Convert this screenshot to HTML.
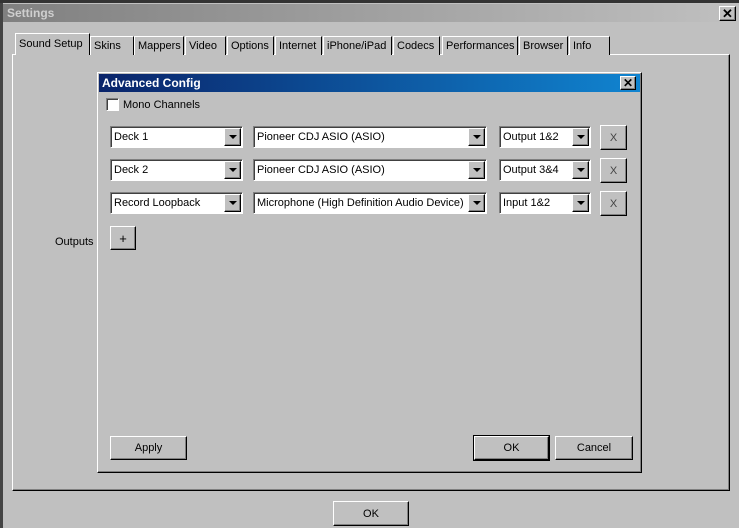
<!DOCTYPE html>
<html><head><style>
*{box-sizing:border-box;margin:0;padding:0}
body{width:739px;height:528px;overflow:hidden;background:#c0c0c0;font-family:"Liberation Sans",sans-serif;font-size:11px;color:#000;position:relative}
.a{position:absolute}
.raised{background:#c0c0c0;border:1px solid;border-color:#fff #000 #000 #fff;box-shadow:inset -1px -1px 0 #808080}
.sunk{background:#fff;border:1px solid;border-color:#808080 #fff #fff #808080;box-shadow:inset 1px 1px 0 #404040}
.btn{display:flex;align-items:center;justify-content:center;font-size:11px}
.combo{font-size:11px;line-height:20px;padding-left:3px;white-space:nowrap;overflow:hidden}
.arr{position:absolute;right:1px;top:1px;width:17px;height:18px;background:#c0c0c0;border:1px solid;border-color:#fff #000 #000 #fff;box-shadow:inset -1px -1px 0 #808080}
.arr:after{content:"";position:absolute;left:4px;top:6px;border-left:4px solid transparent;border-right:4px solid transparent;border-top:4px solid #000}
.tab{position:absolute;top:36px;height:19px;border:1px solid;border-bottom:none;border-color:#fff #000 transparent #fff;padding:0 3px;line-height:18px;font-size:11px;background:#c0c0c0}
</style></head><body>
<div class="a" style="left:0;top:0;width:739px;height:3px;background:#333"></div>
<div class="a" style="left:0;top:3px;width:3px;height:525px;background:#444"></div>
<div class="a" style="left:3px;top:4px;width:736px;height:18px;background:linear-gradient(90deg,#808080,#c0c0c0);color:#cfcfcf;font-weight:bold;font-size:12px;line-height:18px;padding-left:4px">Settings</div>
<div class="a raised btn" style="left:719px;top:6px;width:17px;height:15px;font-size:13px;font-weight:bold">✕</div>

<div class="a" style="left:12px;top:54px;width:718px;height:437px;border:1px solid;border-color:#fff #000 #000 #fff;box-shadow:inset -1px -1px 0 #808080"></div>
<div class="tab" style="left:15px;top:33px;height:22px;width:75px;line-height:21px;z-index:2">Sound Setup</div>
<div class="tab" style="left:90px;width:44px">Skins</div>
<div class="tab" style="left:134px;width:50px">Mappers</div>
<div class="tab" style="left:185px;width:41px">Video</div>
<div class="tab" style="left:227px;width:47px">Options</div>
<div class="tab" style="left:275px;width:47px">Internet</div>
<div class="tab" style="left:323px;width:69px">iPhone/iPad</div>
<div class="tab" style="left:393px;width:47px">Codecs</div>
<div class="tab" style="left:442px;width:76px">Performances</div>
<div class="tab" style="left:519px;width:49px">Browser</div>
<div class="tab" style="left:569px;width:41px">Info</div>

<div class="a" style="left:55px;top:236px">Outputs</div>

<div class="a" style="left:97px;top:72px;width:545px;height:401px;border:1px solid;border-color:#fff #000 #000 #fff;box-shadow:inset -1px -1px 0 #808080"></div>
<div class="a" style="left:99px;top:74px;width:541px;height:18px;background:linear-gradient(90deg,#0a246a,#1084d0);color:#fff;font-weight:bold;font-size:12px;line-height:18px;padding-left:3px">Advanced Config</div>
<div class="a raised btn" style="left:620px;top:76px;width:16px;height:14px;font-size:12px;font-weight:bold">✕</div>

<div class="a sunk" style="left:106px;top:98px;width:13px;height:13px"></div>
<div class="a" style="left:123px;top:99px">Mono Channels</div>

<div class="a sunk combo" style="left:110px;top:126px;width:133px;height:22px">Deck 1<div class="arr"></div></div>
<div class="a sunk combo" style="left:253px;top:126px;width:234px;height:22px">Pioneer CDJ ASIO (ASIO)<div class="arr"></div></div>
<div class="a sunk combo" style="left:499px;top:126px;width:92px;height:22px">Output 1&amp;2<div class="arr"></div></div>
<div class="a raised btn" style="left:600px;top:125px;width:27px;height:25px;color:#444">X</div>

<div class="a sunk combo" style="left:110px;top:159px;width:133px;height:22px">Deck 2<div class="arr"></div></div>
<div class="a sunk combo" style="left:253px;top:159px;width:234px;height:22px">Pioneer CDJ ASIO (ASIO)<div class="arr"></div></div>
<div class="a sunk combo" style="left:499px;top:159px;width:92px;height:22px">Output 3&amp;4<div class="arr"></div></div>
<div class="a raised btn" style="left:600px;top:158px;width:27px;height:25px;color:#444">X</div>

<div class="a sunk combo" style="left:110px;top:192px;width:133px;height:22px">Record Loopback<div class="arr"></div></div>
<div class="a sunk combo" style="left:253px;top:192px;width:234px;height:22px">Microphone (High Definition Audio Device)<div class="arr"></div></div>
<div class="a sunk combo" style="left:499px;top:192px;width:92px;height:22px">Input 1&amp;2<div class="arr"></div></div>
<div class="a raised btn" style="left:600px;top:191px;width:27px;height:25px;color:#444">X</div>

<div class="a raised btn" style="left:110px;top:226px;width:26px;height:24px;font-size:13px">+</div>

<div class="a raised btn" style="left:110px;top:436px;width:77px;height:24px">Apply</div>
<div class="a raised btn" style="left:474px;top:436px;width:75px;height:24px;outline:1px solid #000">OK</div>
<div class="a raised btn" style="left:555px;top:436px;width:78px;height:24px">Cancel</div>

<div class="a raised btn" style="left:333px;top:501px;width:76px;height:25px">OK</div>
</body></html>
